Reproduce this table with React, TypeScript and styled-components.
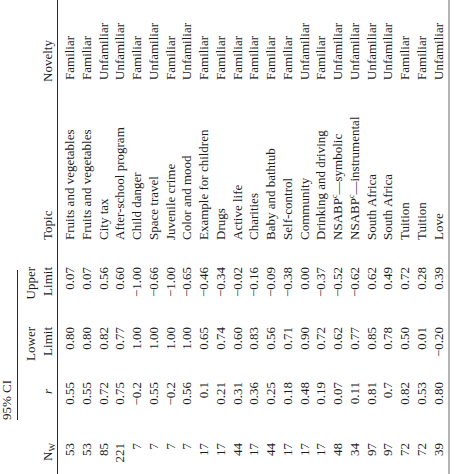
import React from 'react';
import styled, { createGlobalStyle } from 'styled-components';

// the page is a scanned table turned a quarter turn: it is laid out upright, then rotated

const GlobalStyle = createGlobalStyle`
    html, body {
        margin: 0;
        padding: 0;
        background: #ffffff;
    }
`;

type Align = 'left' | 'right';

type ColSpec = {
    w: number;
    align: Align;
    pl: number;
    pr: number;
};

const cols: ColSpec[] = [
    { w: 54, align: 'right', pl: 0, pr: 23 },
    { w: 56, align: 'right', pl: 0, pr: 18 },
    { w: 50, align: 'right', pl: 0, pr: 13 },
    { w: 50, align: 'right', pl: 0, pr: 3 },
    { w: 180, align: 'left', pl: 24, pr: 0 },
    { w: 84, align: 'left', pl: 4, pr: 0 },
];

const rows: string[][] = [
    ['53', '0.55', '0.80', '0.07', 'Fruits and vegetables', 'Familiar'],
    ['53', '0.55', '0.80', '0.07', 'Fruits and vegetables', 'Familiar'],
    ['85', '0.72', '0.82', '0.56', 'City tax', 'Unfamiliar'],
    ['221', '0.75', '0.77', '0.60', 'After-school program', 'Unfamiliar'],
    ['7', '\u22120.2', '1.00', '\u22121.00', 'Child danger', 'Familiar'],
    ['7', '0.55', '1.00', '\u22120.66', 'Space travel', 'Unfamiliar'],
    ['7', '\u22120.2', '1.00', '\u22121.00', 'Juvenile crime', 'Familiar'],
    ['7', '0.56', '1.00', '\u22120.65', 'Color and mood', 'Unfamiliar'],
    ['17', '0.1', '0.65', '\u22120.46', 'Example for children', 'Familiar'],
    ['17', '0.21', '0.74', '\u22120.34', 'Drugs', 'Familiar'],
    ['44', '0.31', '0.60', '\u22120.02', 'Active life', 'Familiar'],
    ['17', '0.36', '0.83', '\u22120.16', 'Charities', 'Familiar'],
    ['44', '0.25', '0.56', '\u22120.09', 'Baby and bathtub', 'Familiar'],
    ['17', '0.18', '0.71', '\u22120.38', 'Self-control', 'Familiar'],
    ['17', '0.48', '0.90', '0.00', 'Community', 'Unfamiliar'],
    ['17', '0.19', '0.72', '\u22120.37', 'Drinking and driving', 'Familiar'],
    ['48', '0.07', '0.62', '\u22120.52', 'NSABP|\u2014symbolic', 'Unfamiliar'],
    ['34', '0.11', '0.77', '\u22120.62', 'NSABP|\u2014instrumental', 'Unfamiliar'],
    ['97', '0.81', '0.85', '0.62', 'South Africa', 'Unfamiliar'],
    ['97', '0.7', '0.78', '0.49', 'South Africa', 'Unfamiliar'],
    ['72', '0.82', '0.50', '0.72', 'Tuition', 'Familiar'],
    ['72', '0.53', '0.01', '0.28', 'Tuition', 'Familiar'],
    ['39', '0.80', '\u22120.20', '0.39', 'Love', 'Unfamiliar'],
];

const renderText = (text: string) => {
    if (!text.includes('|')) return text;
    const [head, rest] = text.split('|');
    return (
        <>
            {head}
            <Sup>c</Sup>
            {rest}
        </>
    );
};

export default function App() {
    return (
        <>
            <GlobalStyle />
            <Page>
                <Sheet>
                    <Table>
                        <colgroup>
                            {cols.map((c, i) => (
                                <Col key={i} $w={c.w} />
                            ))}
                        </colgroup>
                        <thead>
                            <tr>
                                <HeadCell rowSpan={2} $align="right" $pl={0} $pr={23} $rule>
                                    N<Sub>W</Sub>
                                </HeadCell>
                                <SpanCell colSpan={3}>
                                    <SpanLabel>95% CI</SpanLabel>
                                </SpanCell>
                                <HeadCell rowSpan={2} $align="left" $pl={24} $pr={0} $rule>
                                    Topic
                                </HeadCell>
                                <HeadCell rowSpan={2} $align="left" $pl={2} $pr={0} $rule>
                                    Novelty
                                </HeadCell>
                            </tr>
                            <tr>
                                <HeadCell $align="right" $pl={0} $pr={25} $rule>
                                    <em>r</em>
                                </HeadCell>
                                <HeadCell $align="right" $pl={0} $pr={13} $rule>
                                    Lower
                                    <br />
                                    Limit
                                </HeadCell>
                                <HeadCell $align="right" $pl={0} $pr={3} $rule>
                                    Upper
                                    <br />
                                    Limit
                                </HeadCell>
                            </tr>
                        </thead>
                        <Body>
                            {rows.map((r, ri) => (
                                <tr key={ri}>
                                    {r.map((v, ci) => (
                                        <Cell
                                            key={ci}
                                            $align={cols[ci].align}
                                            $pl={cols[ci].pl}
                                            $pr={cols[ci].pr}
                                        >
                                            {renderText(v)}
                                        </Cell>
                                    ))}
                                </tr>
                            ))}
                        </Body>
                    </Table>
                </Sheet>
            </Page>
        </>
    );
}

const Page = styled.div`
    width: 474px;
    height: 474px;
    overflow: hidden;
    background: #ffffff;
`;

const Sheet = styled.div`
    width: 474px;
    height: 474px;
    transform: rotate(-90deg);
    transform-origin: 50% 50%;
    overflow: hidden;
`;

const Table = styled.table`
    width: 474px;
    margin-top: -4px;
    border-collapse: collapse;
    table-layout: fixed;
    font-family: "Liberation Serif", "Times New Roman", serif;
    font-size: 13px;
    color: #1c1c1c;
`;

const Col = styled.col<{ $w: number }>`
    width: ${(p) => p.$w}px;
`;

const HeadCell = styled.th<{ $align: Align; $pl: number; $pr: number; $rule?: boolean }>`
    font-weight: 400;
    text-align: ${(p) => p.$align};
    vertical-align: bottom;
    line-height: 17px;
    padding: 4px ${(p) => p.$pr}px 1px ${(p) => p.$pl}px;
    white-space: nowrap;
    border-bottom: ${(p) => (p.$rule ? '1px solid #2a2a2a' : 'none')};

    em {
        font-style: italic;
    }
`;

const SpanCell = styled.th`
    font-weight: 400;
    padding: 0;
    vertical-align: top;
`;

const SpanLabel = styled.div`
    text-align: left;
    line-height: 14px;
    padding: 4px 0 3px;
    margin-right: 6px;
    border-bottom: 1px solid #2a2a2a;
`;

const Body = styled.tbody`
    tr:first-child td {
        padding-top: 4px;
    }

    tr:last-child td {
        padding-bottom: 1px;
        border-bottom: 2px solid #b4b4b4;
    }
`;

const Cell = styled.td<{ $align: Align; $pl: number; $pr: number }>`
    text-align: ${(p) => p.$align};
    line-height: 16.75px;
    padding: 0 ${(p) => p.$pr}px 0 ${(p) => p.$pl}px;
    white-space: nowrap;
`;

const Sub = styled.sub`
    font-size: 9px;
    line-height: 0;
    vertical-align: -3px;
`;

const Sup = styled.sup`
    font-size: 8px;
    line-height: 0;
    vertical-align: 5px;
`;
